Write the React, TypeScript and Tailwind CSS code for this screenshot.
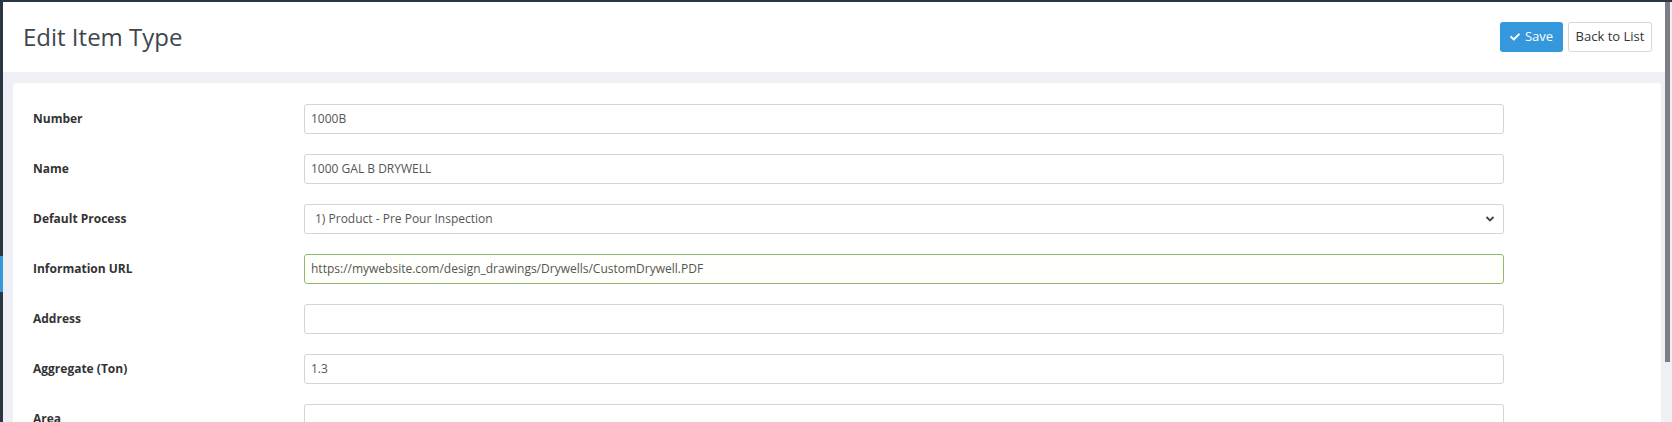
import React from "react";
import { FaCheck } from "react-icons/fa";

const rows: { label: string; value: string; kind?: "select" | "focus" }[] = [
  { label: "Number", value: "1000B" },
  { label: "Name", value: "1000 GAL B DRYWELL" },
  { label: "Default Process", value: "1) Product - Pre Pour Inspection", kind: "select" },
  { label: "Information URL", value: "https://mywebsite.com/design_drawings/Drywells/CustomDrywell.PDF", kind: "focus" },
  { label: "Address", value: "" },
  { label: "Aggregate (Ton)", value: "1.3" },
  { label: "Area", value: "" },
];

export default function App() {
  return (
    <div
      className="flex h-[422px] w-[1672px] overflow-hidden bg-white"
      style={{ fontFamily: '"Open Sans", "Liberation Sans", sans-serif' }}
    >
      {/* left dark strip */}
      <div className="flex w-[3px] shrink-0 flex-col bg-[#2b3643]">
        <div className="h-[256px] shrink-0" />
        <div className="h-[36px] shrink-0 bg-[#3598dc]" />
      </div>

      {/* main */}
      <div className="flex min-w-0 flex-1 flex-col">
        <div className="h-[2px] shrink-0 bg-[#2b3643]" />
        <div className="flex h-[70px] shrink-0 items-center justify-between pl-5 pr-[13px]">
          <h1 className="text-[24px] leading-none text-[#41464d]">Edit Item Type</h1>
          <div className="flex gap-[5px]">
            <button className="flex h-[30px] w-[63px] items-center justify-center gap-[5px] rounded-[3px] bg-[#3598dc] text-[13px] text-white">
              <FaCheck className="h-[10px] w-[10px]" />
              Save
            </button>
            <button className="h-[30px] w-[84px] rounded-[3px] border border-[#d6d6d6] bg-white text-[13px] text-[#333]">
              Back to List
            </button>
          </div>
        </div>
        <div className="flex-1 bg-[#eef0f5] pl-[10px] pr-[4px] pt-[11px]">
          <div className="h-full rounded-[4px] bg-white pl-5 pt-[21px]">
            <div className="flex flex-col gap-5">
              {rows.map((r) => (
                <div key={r.label} className="flex items-center">
                  <div className="w-[271px] shrink-0 text-[12px] font-bold text-[#333]">{r.label}</div>
                  <div
                    className={
                      r.kind === "focus"
                        ? "flex h-[30px] w-[1200px] items-center rounded-[3px] border border-[#93b874] bg-[#fffffb] px-[6px] text-[12px] text-[#555]"
                        : "flex h-[30px] w-[1200px] items-center justify-between rounded-[3px] border border-[#d4d4d4] bg-white px-[6px] text-[12px] text-[#555]"
                    }
                  >
                    <span className={r.kind === "select" ? "pl-[4px]" : ""}>{r.value}</span>
                    {r.kind === "select" && (
                      <svg width="10" height="8" viewBox="0 0 10 8" className="mr-[2px]">
                        <path d="M1.5 2 L5 5.5 L8.5 2" fill="none" stroke="#444" strokeWidth="1.8" />
                      </svg>
                    )}
                  </div>
                </div>
              ))}
            </div>
          </div>
        </div>
      </div>

      {/* scrollbar */}
      <div className="flex w-[7px] shrink-0 flex-col bg-[#eef0f5]">
        <div className="h-[2px] shrink-0 bg-[#2b3643]" />
        <div className="h-[360px] w-[5px] shrink-0 bg-[#7e7d85]" />
      </div>
    </div>
  );
}
